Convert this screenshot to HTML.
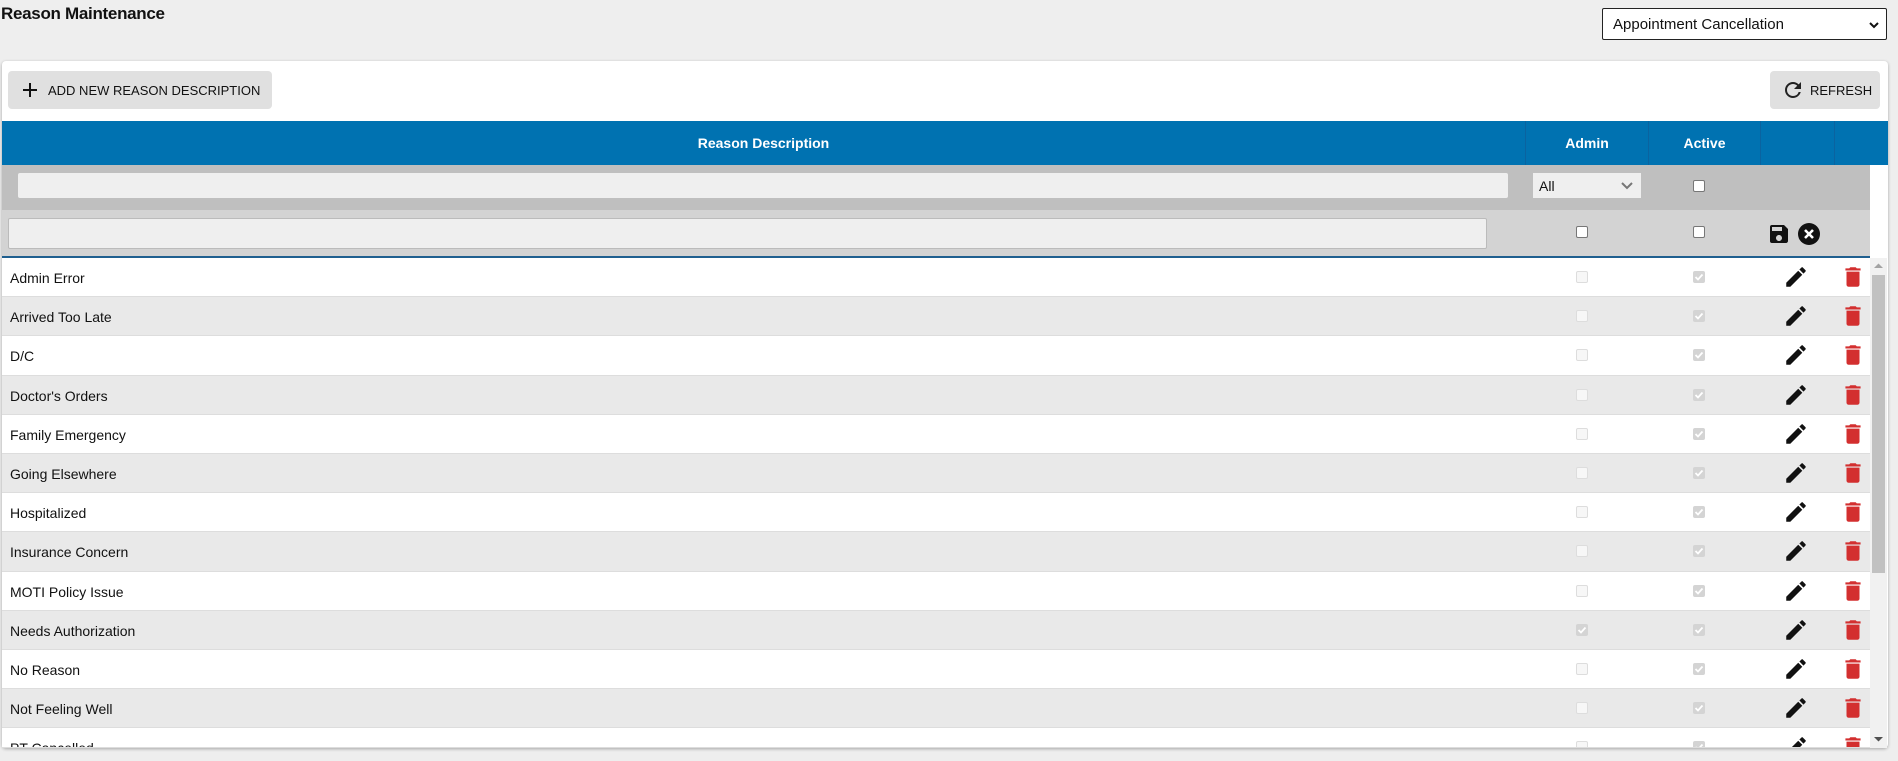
<!DOCTYPE html>
<html><head><meta charset="utf-8"><style>
*{box-sizing:border-box;margin:0;padding:0}
body{width:1898px;height:761px;background:#eeeeee;font-family:"Liberation Sans",sans-serif;position:relative;overflow:hidden;color:#111}
.abs{position:absolute}
.title{left:1px;top:4px;font-size:17px;font-weight:bold;letter-spacing:-0.3px}
.sel{left:1602px;top:8px;width:285px;height:32px;border:1px solid #222;border-radius:2px;background:#fff;font-size:15px;padding:7px 10px}
.card{left:2px;top:61px;width:1886px;height:687px;background:#fff;border-radius:4px;box-shadow:0 1px 3px rgba(0,0,0,.3);overflow:hidden}
.btn{background:#e0e0e0;border-radius:4px;font-size:13px;display:flex;align-items:center;height:38px;top:71px;white-space:nowrap}
.hdr{left:2px;top:121px;width:1886px;height:44px;background:#0072b1}
.hdr div{position:absolute;top:0;height:44px;line-height:44px;color:#fff;font-weight:bold;font-size:14px;text-align:center;border-right:1px solid #0a63a0}
.cb{position:absolute;width:12px;height:12px;border:1px solid #777;border-radius:2px;background:#fff}
.cbd{position:absolute;width:12px;height:12px;border:1px solid #ddd;border-radius:2px;background:#f7f7f7}
.cbc{position:absolute;width:12px;height:12px;border-radius:2px;background:#d4d4d4}
.row{position:absolute;left:2px;width:1868px;height:39px;border-bottom:1px solid #ddd;font-size:14px}
.row span{position:absolute;left:8px;top:12px}
</style></head><body>
<div class="abs title">Reason Maintenance</div>
<div class="abs sel">Appointment Cancellation<svg class="abs" style="right:6px;top:11px" width="12" height="10" viewBox="0 0 12 10"><path d="M2 3l4 4 4-4" stroke="#111" stroke-width="2" fill="none"/></svg></div>
<div class="abs card"></div>
<div class="abs btn" style="left:8px;width:264px"><svg style="margin-left:13px" width="18" height="18" viewBox="0 0 18 18"><path d="M9 2v14M2 9h14" stroke="#111" stroke-width="2"/></svg><span style="margin-left:9px">ADD NEW REASON DESCRIPTION</span></div>
<div class="abs btn" style="left:1770px;width:110px"><svg style="margin-left:11px" width="24" height="24" viewBox="0 0 24 24"><path d="M17.65 6.35A7.958 7.958 0 0 0 12 4c-4.42 0-7.99 3.58-7.99 8s3.57 8 7.99 8c3.73 0 6.84-2.55 7.73-6h-2.08A5.99 5.99 0 0 1 12 18c-3.31 0-6-2.69-6-6s2.69-6 6-6c1.66 0 3.14.69 4.22 1.78L13 11h7V4l-2.35 2.35z" fill="#222"/></svg><span style="margin-left:5px">REFRESH</span></div>
<div class="abs hdr">
<div style="left:0;width:1524px">Reason Description</div>
<div style="left:1524px;width:123px">Admin</div>
<div style="left:1647px;width:112px">Active</div>
<div style="left:1759px;width:74px"></div>
<div style="left:1833px;width:53px;border:none"></div>
</div>
<div class="abs" style="left:2px;top:165px;width:1868px;height:45px;background:#bfbfbf"></div>
<div class="abs" style="left:18px;top:173px;width:1490px;height:25px;background:#efefef;border-radius:2px"></div>
<div class="abs" style="left:1533px;top:173px;width:108px;height:25px;background:#efefef;font-size:14px;padding:5px 6px">All<svg class="abs" style="right:8px;top:9px" width="12" height="8" viewBox="0 0 12 8"><path d="M1 1l5 5 5-5" stroke="#777" stroke-width="2" fill="none"/></svg></div>
<div class="cb" style="left:1693px;top:180px"></div>
<div class="abs" style="left:2px;top:210px;width:1868px;height:47px;background:#d3d3d3"></div>
<div class="abs" style="left:8px;top:218px;width:1479px;height:31px;background:#efefef;border:1px solid #bbb;border-radius:2px"></div>
<div class="cb" style="left:1576px;top:226px"></div>
<div class="cb" style="left:1693px;top:226px"></div>
<svg class="abs" style="left:1767px;top:222px" width="24" height="24" viewBox="0 0 24 24"><path d="M17 3H5a2 2 0 0 0-2 2v14a2 2 0 0 0 2 2h14c1.1 0 2-.9 2-2V7l-4-4zm-5 16c-1.66 0-3-1.34-3-3s1.34-3 3-3 3 1.34 3 3-1.34 3-3 3zm3-10H5V5h10v4z" fill="#111"/></svg>
<svg class="abs" style="left:1797px;top:222px" width="24" height="24" viewBox="0 0 24 24"><circle cx="12" cy="12" r="11" fill="#111"/><path d="M8 8l8 8M16 8l-8 8" stroke="#fff" stroke-width="2.6"/></svg>
<div class="abs" style="left:2px;top:256px;width:1868px;height:2px;background:#1f5f8f"></div>
<div id="rows"></div>
<div class="abs" style="left:1870px;top:258px;width:17px;height:490px;background:#f1f1f1"></div>
<div class="abs" style="left:1872px;top:275px;width:13px;height:298px;background:#c1c1c1"></div>
<svg class="abs" style="left:1874px;top:263px" width="9" height="6"><path d="M0 5l4.5-4.5L9 5z" fill="#a3a3a3"/></svg>
<svg class="abs" style="left:1874px;top:736px" width="9" height="6"><path d="M0 1h9L4.5 5.5z" fill="#505050"/></svg>
<script>
var names=["Admin Error","Arrived Too Late","D/C","Doctor's Orders","Family Emergency","Going Elsewhere","Hospitalized","Insurance Concern","MOTI Policy Issue","Needs Authorization","No Reason","Not Feeling Well","PT Cancelled"];
var h="";
for(var i=0;i<13;i++){var t=258+i*39.2;
var tt=Math.round(t), hh=(i==12)?748-tt:Math.round(t+39.2)-tt;
h+='<div class="row" style="top:'+tt+'px;height:'+hh+'px;background:'+(i%2?'#e9e9e9':'#fff')+';overflow:hidden"><span>'+names[i]+'</span>'+
(i==9?'<div class="cbc" style="left:1574px;top:13px"><svg width="12" height="12" viewBox="0 0 12 12" style="position:absolute;left:0;top:0"><path d="M2.5 6l2.5 2.5 4.5-5" stroke="#fff" stroke-width="1.8" fill="none"/></svg></div>':'<div class="cbd" style="left:1574px;top:13px"></div>')+
'<div class="cbc" style="left:1691px;top:13px"><svg width="12" height="12" viewBox="0 0 12 12" style="position:absolute;left:0;top:0"><path d="M2.5 6l2.5 2.5 4.5-5" stroke="#fff" stroke-width="1.8" fill="none"/></svg></div>'+
'<svg style="position:absolute;left:1781px;top:6px" width="26" height="26" viewBox="0 0 24 24"><path d="M3 17.25V21h3.75L17.81 9.94l-3.75-3.75L3 17.25zM20.71 7.04a1 1 0 0 0 0-1.41l-2.34-2.34a1 1 0 0 0-1.41 0l-1.83 1.83 3.75 3.75 1.83-1.83z" fill="#111"/></svg>'+
'<svg style="position:absolute;left:1838px;top:6px" width="26" height="26" viewBox="0 0 24 24"><path d="M6 19c0 1.1.9 2 2 2h8c1.1 0 2-.9 2-2V7H6v12zM19 4h-3.5l-1-1h-5l-1 1H5v2h14V4z" fill="#d32f2f"/></svg></div>';}
document.getElementById("rows").innerHTML=h;
</script>
</body></html>
